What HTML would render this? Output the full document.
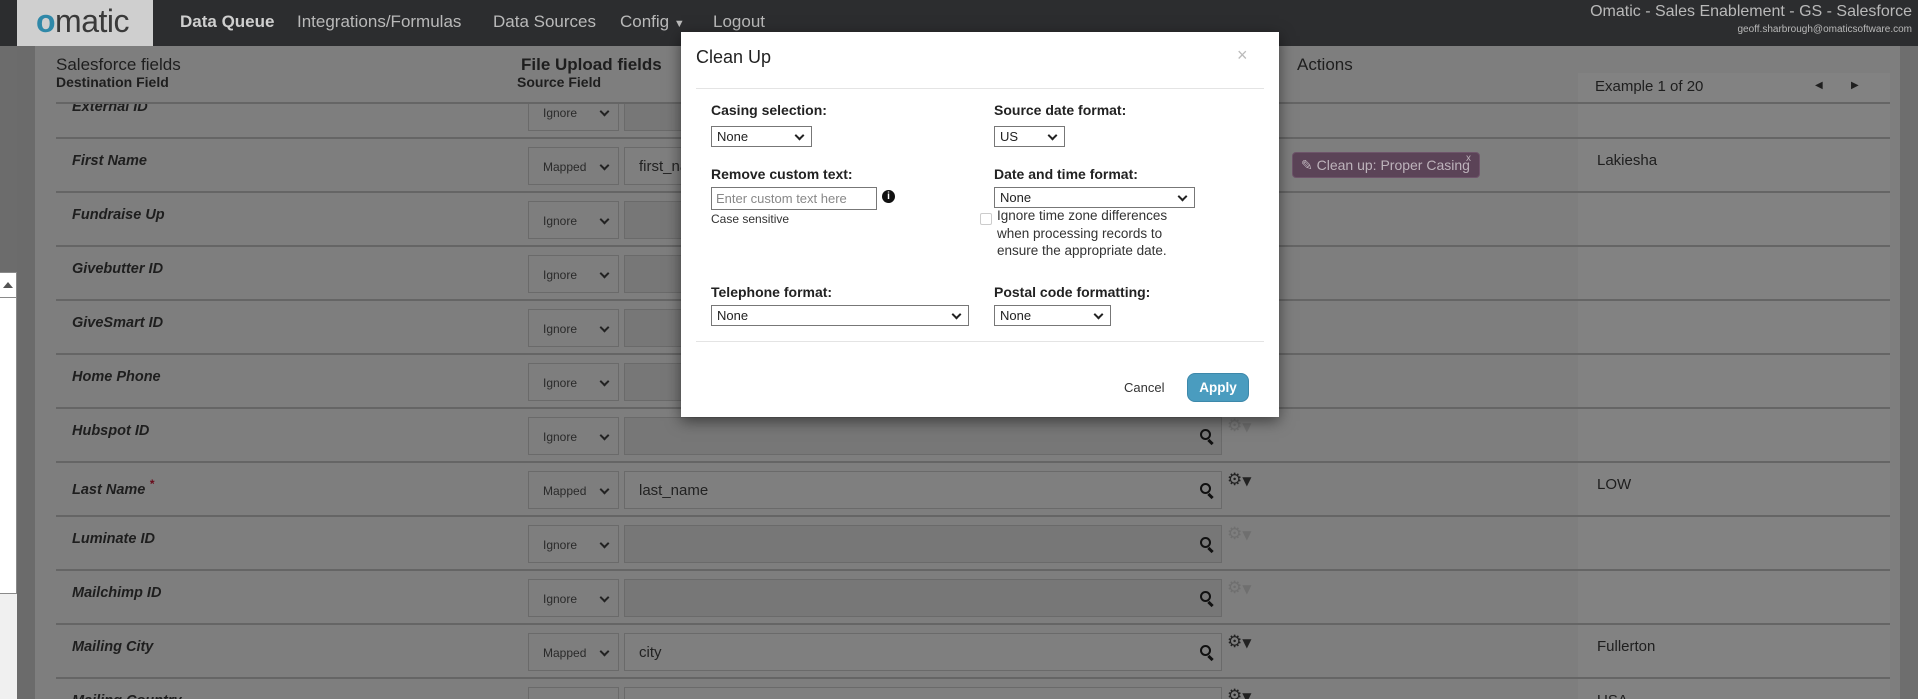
<!DOCTYPE html>
<html><head><meta charset="utf-8"><style>
*{margin:0;padding:0;box-sizing:border-box}
body{width:1918px;height:699px;overflow:hidden;background:#7e7e7e;font-family:"Liberation Sans Narrow","Liberation Sans",sans-serif;position:relative}
.a{position:absolute}
.nav{left:0;top:0;width:1918px;height:46px;background:#2c2d2f}
.navi{top:12px;font-size:17px;color:#b9b9b9;white-space:nowrap}
.row{position:absolute;left:0;width:1918px;height:54px}
.row .ln{position:absolute;left:56px;width:1834px;top:53px;height:2px;background:#656565}
.lbl{position:absolute;left:72px;top:15px;font-size:14.5px;font-style:italic;font-weight:bold;color:#1e1e1e}
.sel{position:absolute;left:528px;top:9px;width:91px;height:38px;border:1px solid #6a6a6a;font-size:12px;color:#2a2a2a;padding:12px 0 0 14px}
.sel:after{content:"";position:absolute;right:10px;top:14px;width:5px;height:5px;border-right:2px solid #222;border-bottom:2px solid #222;transform:rotate(45deg)}
.inp{position:absolute;left:624px;top:9px;width:598px;height:38px;border:1px solid #6a6a6a;background:#777;font-size:15px;color:#222;padding:10px 0 0 14px}
.inp.m{background:#7f7f7f}
.srch{position:absolute;right:10px;top:11px;width:11px;height:11px;border:2.5px solid #111;border-radius:50%}
.srch:after{content:"";position:absolute;left:7px;top:8px;width:3px;height:6px;background:#111;transform:rotate(-45deg)}
.gear{position:absolute;left:1227px;top:8px;font-family:"DejaVu Sans",sans-serif;font-size:17px;color:#222}
.gear.f{color:#6f6f6f}
.val{position:absolute;left:1597px;top:14px;font-size:15px;color:#1e1e1e}
.m14{font-family:"Liberation Sans",sans-serif}
.ml{position:absolute;font-size:14px;font-weight:bold;color:#222;font-family:"Liberation Sans",sans-serif}
.ms{position:absolute;border:1px solid #777;height:21px;font-size:13px;color:#222;padding:2px 0 0 5px;font-family:"Liberation Sans",sans-serif;background:#fff}
.ms:after{content:"";position:absolute;right:8px;top:5px;width:5px;height:5px;border-right:2px solid #222;border-bottom:2px solid #222;transform:rotate(45deg)}
</style></head><body>
<div class="a" style="left:0;top:0;width:17px;height:46px;background:#e6e6e6"></div>
<div class="a" style="left:0;top:36px;font-size:12px;color:#222;font-family:'DejaVu Sans'">✓</div>
<div class="a" style="left:0;top:46px;width:17px;height:226px;background:#6c6c6c"></div>
<div class="a" style="left:0;top:272px;width:17px;height:322px;background:#fff;border:1px solid #8a8a8a;border-left:none"></div>
<div class="a" style="left:0;top:272px;width:17px;height:26px;border-bottom:1px solid #8a8a8a"></div>
<div class="a" style="left:3px;top:282px;width:0;height:0;border-left:5px solid transparent;border-right:5px solid transparent;border-bottom:6px solid #555"></div>
<div class="a" style="left:0;top:594px;width:17px;height:105px;background:#f0f0f0"></div>
<div class="a" style="left:17px;top:46px;width:18px;height:653px;background:#6b6b6b"></div>
<div class="a" style="left:1900px;top:46px;width:18px;height:653px;background:#6e6e6e"></div>
<div class="a" style="left:1578px;top:73px;width:312px;height:626px;background:#828282"></div>
<div class="a nav"></div>
<div class="a" style="left:17px;top:0;width:136px;height:46px;background:#cfcfcf"></div>
<div class="a" style="left:36px;top:3px;font-size:32px;color:#3a3a3a;font-family:'Liberation Sans',sans-serif;letter-spacing:-0.5px"><span style="color:#2f88a8;font-weight:bold">o</span>matic</div>
<div class="a navi" style="left:180px;color:#cfcfcf;font-weight:bold">Data Queue</div>
<div class="a navi" style="left:297px">Integrations/Formulas</div>
<div class="a navi" style="left:493px">Data Sources</div>
<div class="a navi" style="left:620px">Config <span style="font-size:11px">▼</span></div>
<div class="a navi" style="left:713px">Logout</div>
<div class="a" style="right:6px;top:3px;font-size:16px;color:#b9b9b9;white-space:nowrap">Omatic - Sales Enablement - GS - Salesforce</div>
<div class="a" style="right:6px;top:24px;font-size:10px;color:#b9b9b9;white-space:nowrap">geoff.sharbrough@omaticsoftware.com</div>
<div class="a" style="left:56px;top:55px;font-size:17px;color:#1e1e1e">Salesforce fields</div>
<div class="a" style="left:56px;top:74px;font-size:14px;color:#1e1e1e;font-weight:bold">Destination Field</div>
<div class="a" style="left:521px;top:55px;font-size:17px;color:#1e1e1e;font-weight:bold">File Upload fields</div>
<div class="a" style="left:517px;top:74px;font-size:14px;color:#1e1e1e;font-weight:bold">Source Field</div>
<div class="a" style="left:1297px;top:55px;font-size:17px;color:#1e1e1e">Actions</div>
<div class="a" style="left:1595px;top:78px;font-size:15px;color:#1e1e1e">Example 1 of 20</div>
<div class="a" style="left:1815px;top:80px;font-size:10px;color:#1e1e1e">◀</div>
<div class="a" style="left:1851px;top:80px;font-size:10px;color:#1e1e1e">▶</div>
<div class="a" style="left:56px;top:102px;width:1834px;height:2px;background:#656565"></div>
<div class="a" style="left:0;top:104px;width:1918px;height:595px;overflow:hidden">
<div class="row" style="top:-20px"><div class="lbl">External ID</div><div class="sel">Ignore</div><div class="inp"></div><div class="ln"></div></div>
<div class="row" style="top:34px"><div class="lbl">First Name</div><div class="sel">Mapped</div><div class="inp m">first_name<div class="srch"></div></div><div class="gear">⚙<span style="font-size:12px">▼</span></div>
<div class="a" style="left:1292px;top:14px;width:188px;height:26px;background:#5b4357;border:1px solid #6e546a;border-radius:4px;font-size:14px;color:#bdb3bb;padding:4px 0 0 8px">✎ Clean up: Proper Casing<span style="position:absolute;right:8px;top:0;font-size:10px">x</span></div>
<div class="val">Lakiesha</div><div class="ln"></div></div>
<div class="row" style="top:88px"><div class="lbl">Fundraise Up</div><div class="sel">Ignore</div><div class="inp"><div class="srch"></div></div><div class="gear f">⚙<span style="font-size:12px">▼</span></div><div class="ln"></div></div>
<div class="row" style="top:142px"><div class="lbl">Givebutter ID</div><div class="sel">Ignore</div><div class="inp"><div class="srch"></div></div><div class="gear f">⚙<span style="font-size:12px">▼</span></div><div class="ln"></div></div>
<div class="row" style="top:196px"><div class="lbl">GiveSmart ID</div><div class="sel">Ignore</div><div class="inp"><div class="srch"></div></div><div class="gear f">⚙<span style="font-size:12px">▼</span></div><div class="ln"></div></div>
<div class="row" style="top:250px"><div class="lbl">Home Phone</div><div class="sel">Ignore</div><div class="inp"><div class="srch"></div></div><div class="gear f">⚙<span style="font-size:12px">▼</span></div><div class="ln"></div></div>
<div class="row" style="top:304px"><div class="lbl">Hubspot ID</div><div class="sel">Ignore</div><div class="inp"><div class="srch"></div></div><div class="gear f">⚙<span style="font-size:12px">▼</span></div><div class="ln"></div></div>
<div class="row" style="top:358px"><div class="lbl">Last Name <sup style="color:#6a0a1a">*</sup></div><div class="sel">Mapped</div><div class="inp m">last_name<div class="srch"></div></div><div class="gear">⚙<span style="font-size:12px">▼</span></div><div class="val">LOW</div><div class="ln"></div></div>
<div class="row" style="top:412px"><div class="lbl">Luminate ID</div><div class="sel">Ignore</div><div class="inp"><div class="srch"></div></div><div class="gear f">⚙<span style="font-size:12px">▼</span></div><div class="ln"></div></div>
<div class="row" style="top:466px"><div class="lbl">Mailchimp ID</div><div class="sel">Ignore</div><div class="inp"><div class="srch"></div></div><div class="gear f">⚙<span style="font-size:12px">▼</span></div><div class="ln"></div></div>
<div class="row" style="top:520px"><div class="lbl">Mailing City</div><div class="sel">Mapped</div><div class="inp m">city<div class="srch"></div></div><div class="gear">⚙<span style="font-size:12px">▼</span></div><div class="val">Fullerton</div><div class="ln"></div></div>
<div class="row" style="top:574px"><div class="lbl">Mailing Country</div><div class="sel">Mapped</div><div class="inp m"><div class="srch"></div></div><div class="gear">⚙<span style="font-size:12px">▼</span></div><div class="val">USA</div><div class="ln"></div></div>
</div>
<div class="a" style="left:681px;top:32px;width:598px;height:385px;background:#fff;box-shadow:0 4px 14px rgba(0,0,0,.5)"></div>
<div class="a m14" style="left:696px;top:47px;font-size:18px;color:#222">Clean Up</div>
<div class="a m14" style="left:1237px;top:45px;font-size:18px;color:#bbb">×</div>
<div class="a" style="left:696px;top:88px;width:568px;height:1px;background:#e4e4e4"></div>
<div class="ml" style="left:711px;top:102px">Casing selection:</div>
<div class="ms" style="left:711px;top:126px;width:101px">None</div>
<div class="ml" style="left:994px;top:102px">Source date format:</div>
<div class="ms" style="left:994px;top:126px;width:71px">US</div>
<div class="ml" style="left:711px;top:166px">Remove custom text:</div>
<div class="a m14" style="left:711px;top:187px;width:166px;height:23px;border:1px solid #777;font-size:13px;color:#888;padding:3px 0 0 4px">Enter custom text here</div>
<div class="a m14" style="left:882px;top:190px;width:13px;height:13px;border-radius:50%;background:#111;color:#fff;font-size:10px;font-weight:bold;text-align:center;line-height:13px">i</div>
<div class="a m14" style="left:711px;top:212px;font-size:12px;color:#333">Case sensitive</div>
<div class="ml" style="left:994px;top:166px">Date and time format:</div>
<div class="ms" style="left:994px;top:187px;width:201px">None</div>
<div class="a" style="left:980px;top:213px;width:12px;height:12px;border:1px solid #ccc;border-radius:2px"></div>
<div class="a m14" style="left:997px;top:207px;font-size:13.5px;color:#333;line-height:17.5px">Ignore time zone differences<br>when processing records to<br>ensure the appropriate date.</div>
<div class="ml" style="left:711px;top:284px">Telephone format:</div>
<div class="ms" style="left:711px;top:305px;width:258px">None</div>
<div class="ml" style="left:994px;top:284px">Postal code formatting:</div>
<div class="ms" style="left:994px;top:305px;width:117px">None</div>
<div class="a" style="left:696px;top:341px;width:568px;height:1px;background:#e4e4e4"></div>
<div class="a m14" style="left:1124px;top:380px;font-size:13px;color:#333">Cancel</div>
<div class="a m14" style="left:1187px;top:373px;width:62px;height:29px;border-radius:8px;background:#4a9cbf;border:1px solid #3d88aa;color:#fff;font-size:13.5px;font-weight:bold;text-align:center;line-height:27px">Apply</div>
</body></html>
